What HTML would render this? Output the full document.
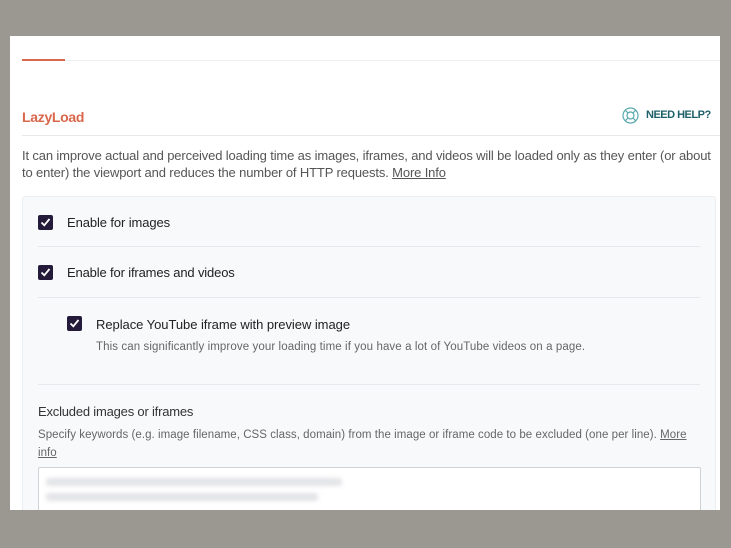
<!DOCTYPE html>
<html><head><style>
body{margin:0;width:731px;height:548px;background:#9b9891;position:relative;overflow:hidden;font-family:"Liberation Sans",sans-serif;}
.p{position:absolute;left:10px;top:36px;width:710px;height:474px;background:#fff;overflow:hidden}
.a{position:absolute;white-space:nowrap}
.cb{position:absolute;width:15px;height:15px;background:#241b3a;border-radius:2px}
.cb svg{position:absolute;left:2px;top:2px}
.hr{position:absolute;height:1px;background:#e6e8ec}
</style></head><body>
<div class="p">
<div class="hr" style="left:12px;top:24px;width:698px;background:#eceef1"></div>
<div class="a" style="left:12px;top:23px;width:43px;height:2px;background:#d9674b"></div>
<div class="a" style="left:12px;top:73px;font-size:14px;font-weight:bold;color:#d9674b;letter-spacing:-0.3px">LazyLoad</div>
<svg class="a" style="left:612px;top:71px" width="17" height="17" viewBox="0 0 17 17" fill="none" stroke="#5aa9ad" stroke-width="1.2"><circle cx="8.5" cy="8.5" r="7.5"/><circle cx="8.5" cy="8.5" r="3.5"/><path d="M3.2 3.2L6 6M13.8 3.2L11 6M3.2 13.8L6 11M13.8 13.8L11 11"/></svg>
<div class="a" style="left:636px;top:73px;font-size:11px;font-weight:bold;color:#1e5f6a;letter-spacing:-0.5px">NEED HELP?</div>
<div class="hr" style="left:12px;top:99px;width:698px"></div>
<div class="a" style="left:12px;top:112px;font-size:13px;line-height:16.5px;color:#555;letter-spacing:-0.14px">It can improve actual and perceived loading time as images, iframes, and videos will be loaded only as they enter (or about<br>to enter) the viewport and reduces the number of HTTP requests. <span style="text-decoration:underline">More Info</span></div>
<div class="a" style="left:12px;top:160px;width:692px;height:330px;background:#f8f9fb;border:1px solid #eaedf1;border-radius:3px"></div>
<div class="cb" style="left:28px;top:179px"><svg width="11" height="11" viewBox="0 0 11 11"><path d="M1.5 5.5L4.3 8.3L9.5 2" stroke="#fff" stroke-width="1.8" fill="none"/></svg></div>
<div class="a" style="left:57px;top:179px;font-size:13px;color:#222;letter-spacing:-0.1px">Enable for images</div>
<div class="hr" style="left:28px;top:210px;width:662px"></div>
<div class="cb" style="left:28px;top:229px"><svg width="11" height="11" viewBox="0 0 11 11"><path d="M1.5 5.5L4.3 8.3L9.5 2" stroke="#fff" stroke-width="1.8" fill="none"/></svg></div>
<div class="a" style="left:57px;top:229px;font-size:13px;color:#222;letter-spacing:-0.15px">Enable for iframes and videos</div>
<div class="hr" style="left:28px;top:261px;width:662px"></div>
<div class="cb" style="left:57px;top:280px"><svg width="11" height="11" viewBox="0 0 11 11"><path d="M1.5 5.5L4.3 8.3L9.5 2" stroke="#fff" stroke-width="1.8" fill="none"/></svg></div>
<div class="a" style="left:86px;top:281px;font-size:13px;color:#222;letter-spacing:-0.05px">Replace YouTube iframe with preview image</div>
<div class="a" style="left:86px;top:305px;font-size:11.5px;color:#666;letter-spacing:0.1px">This can significantly improve your loading time if you have a lot of YouTube videos on a page.</div>
<div class="hr" style="left:28px;top:348px;width:662px"></div>
<div class="a" style="left:28px;top:368px;font-size:13px;color:#333;letter-spacing:-0.2px">Excluded images or iframes</div>
<div class="a" style="left:28px;top:390px;font-size:11.5px;line-height:18px;color:#666;letter-spacing:0.05px">Specify keywords (e.g. image filename, CSS class, domain) from the image or iframe code to be excluded (one per line). <span style="text-decoration:underline">More</span><br><span style="text-decoration:underline">info</span></div>
<div class="a" style="left:28px;top:431px;width:661px;height:60px;background:#fff;border:1px solid #cfd2d6;border-radius:2px"></div>
<div class="a" style="left:36px;top:442px;width:296px;height:8px;background:#e3e4e7;border-radius:3px;filter:blur(2px)"></div>
<div class="a" style="left:36px;top:457px;width:272px;height:8px;background:#e3e4e7;border-radius:3px;filter:blur(2px)"></div>
</div>
</body></html>
